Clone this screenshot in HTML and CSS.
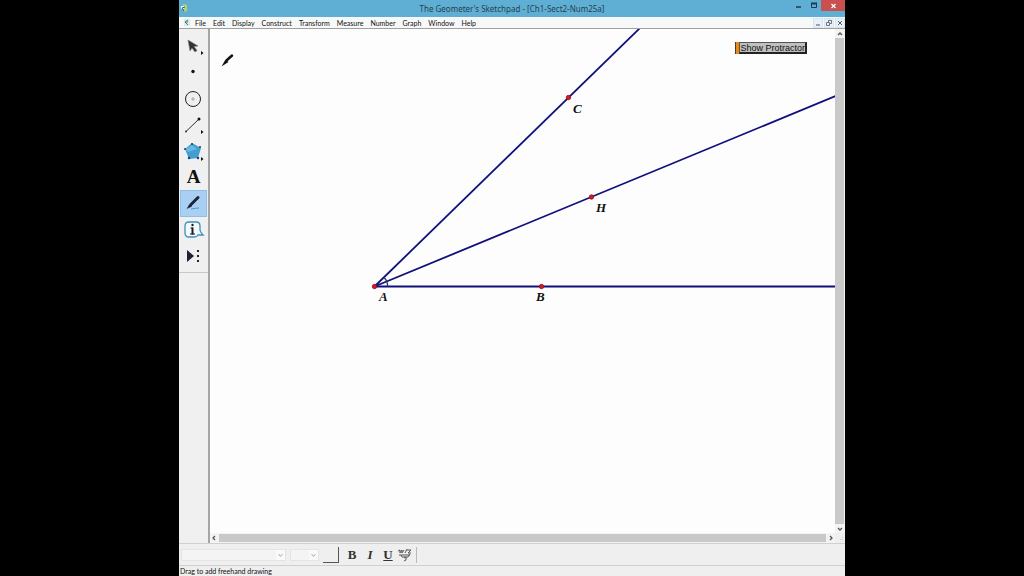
FILE: index.html
```html
<!DOCTYPE html>
<html lang="en">
<head>
    <meta charset="UTF-8">
    <meta name="viewport" content="width=device-width, initial-scale=1.0">
    <title>The Geometer's Sketchpad</title>
    <link rel="stylesheet" href="styles.css">
</head>
<body>
    <div class="window">
        <header class="title-bar">
            <svg class="app-icon" viewBox="0 0 8 10"><path d="M3 1l4 1v6l-3 1z" fill="#b9d36a"/><path d="M1 3h3v3H1z" fill="#e9f4f0"/><path d="M2 5l3-1M2 5l2 3" stroke="#24637c" fill="none"/></svg>
            <h1>The Geometer's Sketchpad - [Ch1-Sect2-Num25a]</h1>
            <div class="window-buttons">
                <button aria-label="Minimize"><svg viewBox="0 0 15 11"><path d="M5 7h5" stroke="#1d3a48" stroke-width="1.500"/></svg></button>
                <button aria-label="Maximize"><svg viewBox="0 0 15 11"><path d="M5.500 3.500h5v4h-5z" fill="none" stroke="#1d3a48"/><path d="M5 3.500h6" stroke="#1d3a48" stroke-width="2"/></svg></button>
                <button class="close" aria-label="Close"><svg viewBox="0 0 23 11"><path d="M10 4l4 4M14 4l-4 4" stroke="#fff" stroke-width="1.200"/></svg></button>
            </div>
        </header>

        <nav class="menu-bar">
            <svg class="doc-icon" viewBox="0 0 8 9"><path d="M1 1h6v7H1z" fill="#d8ebe6"/><path d="M5 2L2 4l3 3M2 4h3" stroke="#3c7d86" fill="none"/></svg>
            <button>File</button>
            <button>Edit</button>
            <button>Display</button>
            <button>Construct</button>
            <button>Transform</button>
            <button>Measure</button>
            <button>Number</button>
            <button>Graph</button>
            <button>Window</button>
            <button>Help</button>
            <div class="doc-buttons">
                <button aria-label="Minimize document"><svg viewBox="0 0 8 8"><path d="M2 6h4" stroke="#47596b"/></svg></button>
                <button aria-label="Restore document"><svg viewBox="0 0 8 8"><path d="M1.500 3.500h3v3h-3zM3.500 3V1.500h3v3H5" fill="none" stroke="#47596b" stroke-width=".8"/></svg></button>
                <button aria-label="Close document"><svg viewBox="0 0 8 8"><path d="M2 2l4 4M6 2L2 6" stroke="#47596b"/></svg></button>
            </div>
        </nav>

        <main class="workspace">
            <aside class="toolbox">
                <div class="tools">
                    <button aria-label="Selection arrow"><svg viewBox="0 0 26 26"><path d="M8 7l10 6-4 .5 3 4-2 1.500-3-4-2 3z" fill="#333" stroke="#777" stroke-width=".6"/><path d="M21 18l2.500 2-2.500 2z" fill="#111"/></svg></button>
                    <button aria-label="Point"><svg viewBox="0 0 26 26"><circle cx="13" cy="12.500" r="1.700" fill="#111"/></svg></button>
                    <button aria-label="Compass"><svg viewBox="0 0 26 26"><circle cx="13" cy="13" r="7.500" fill="none" stroke="#222"/><path d="M11 13h4M13 11v4" stroke="#999" stroke-width=".8"/></svg></button>
                    <button aria-label="Straightedge"><svg viewBox="0 0 26 26"><path d="M6 19.500L19 7" stroke="#333"/><circle cx="6" cy="19.500" r="1" fill="#333"/><circle cx="19" cy="7" r="1.500" fill="#111"/><path d="M21 18l2.500 2-2.500 2z" fill="#111"/></svg></button>
                    <button aria-label="Polygon"><svg viewBox="0 0 26 26"><path d="M12 5l9 5-3 10-9 1-4-10z" fill="#419ed2"/><path d="M12 7l5 4-9 3-2-3z" fill="#6cb8e0"/><g fill="#18415f"><circle cx="12" cy="6" r="1"/><circle cx="20" cy="9" r="1"/><circle cx="18" cy="20" r="1.200"/><circle cx="9" cy="20" r="1.200"/><circle cx="5" cy="11" r="1"/></g><path d="M21 19l2.500 2-2.500 2z" fill="#111"/></svg></button>
                    <button class="text-tool" aria-label="Text">A</button>
                    <button class="active" aria-label="Marker"><svg viewBox="0 0 26 26"><path d="M11 19q5-1 8-1" fill="none" stroke="#4b9bd2"/><path d="M11 14.500l7-7" stroke="#20243a" stroke-width="3" stroke-linecap="round"/><path d="M6.500 19l3-5 2.500 2.500z" fill="#20243a"/></svg></button>
                    <button aria-label="Information"><svg viewBox="0 0 26 26"><path d="M9 5h7q4 0 4 4v4q0 2 3 5h-5q-1 2-4 2H9q-4 0-4-4V9q0-4 4-4z" fill="#f4f9fc" stroke="#3d8fc0" stroke-width="1.300"/><circle cx="12.500" cy="8" r="1.200" fill="#171c2c"/><path d="M10.500 11h2v6M10 17h5" fill="none" stroke="#171c2c" stroke-width="1"/><path d="M12.500 10.500v7" stroke="#171c2c" stroke-width="2"/></svg></button>
                    <button aria-label="Custom tools"><svg viewBox="0 0 26 26"><path d="M7 7l7 6-7 6z" fill="#20212e"/><path d="M17 7h2v2h-2zM17 12h2v2h-2zM17 17h2v2h-2z" fill="#20212e"/></svg></button>
                </div>
            </aside>

            <section class="sketch">
                <svg class="drawing" viewBox="0 0 625 504" preserveAspectRatio="xMinYMin slice">
                    <!-- angle BAC with ray AH between -->
                    <g class="rays">
                        <path d="M164.500 257.500L430 -1"/>
                        <path d="M164.500 257.500L627 66.500"/>
                        <path d="M164.500 257.500H627"/>
                    </g>
                    <path class="arc" d="M174 248.500q4 4 3.500 9"/>
                    <g class="points">
                        <circle cx="164.500" cy="257.500" r="2.200"/>
                        <circle cx="331.500" cy="257.500" r="2.200"/>
                        <circle cx="358.500" cy="68.500" r="2.200"/>
                        <circle cx="381.500" cy="168" r="2.200"/>
                    </g>
                    <g class="labels">
                        <text x="169" y="272">A</text>
                        <text x="326" y="272">B</text>
                        <text x="363" y="84">C</text>
                        <text x="386" y="183">H</text>
                    </g>
                    <!-- marker cursor -->
                    <path d="M17 31l5-4.500" stroke="#111" stroke-width="2.500" stroke-linecap="round"/>
                    <path d="M11.500 37.500l4-7 3 2.500z" fill="#111"/>
                </svg>
                <button class="protractor">Show Protractor</button>
            </section>

            <div class="scroll-v">
                <svg viewBox="0 0 10 9"><path d="M3 6l2-2 2 2" fill="none" stroke="#555" stroke-width="1.300"/></svg>
                <div class="thumb"></div>
                <svg viewBox="0 0 10 9"><path d="M3 4l2 2 2-2" fill="none" stroke="#555" stroke-width="1.300"/></svg>
            </div>
            <div class="scroll-h">
                <svg viewBox="0 0 9 10"><path d="M5 3L3 5l2 2" fill="none" stroke="#555" stroke-width="1.300"/></svg>
                <div class="thumb"></div>
                <svg viewBox="0 0 9 10"><path d="M4 3l2 2-2 2" fill="none" stroke="#555" stroke-width="1.300"/></svg>
            </div>
            <svg class="corner" viewBox="0 0 10 10"><path d="M7 4h1v1H7zM5 6h1v1H5zM7 6h1v1H7z" fill="#c4c4c4"/></svg>
        </main>

        <div class="format-bar">
            <div class="combo">
                <select class="font-name" aria-label="Font"><option></option></select>
                <svg viewBox="0 0 9 10"><path d="M2.500 4l2 2.500 2-2.500" fill="none" stroke="#aaa"/></svg>
            </div>
            <div class="combo">
                <select class="font-size" aria-label="Size"><option></option></select>
                <svg viewBox="0 0 9 10"><path d="M2.500 4l2 2.500 2-2.500" fill="none" stroke="#aaa"/></svg>
            </div>
            <button class="color" aria-label="Color"></button>
            <button class="bold">B</button>
            <button class="italic">I</button>
            <button class="underline">U</button>
            <button class="symbols" aria-label="Math symbols"><svg viewBox="0 0 16 16"><path d="M1 4l2-1v3l2-3v3l2-3M8 6l2-4M10 3h4l-3 3h3M2 8h11M4 8l1 2h6l2-3M7 11l2-1v3l-2 1" fill="none" stroke="#555"/></svg></button>
        </div>

        <footer class="status-bar">Drag to add freehand drawing</footer>
    </div>
</body>
</html>
```
FILE: styles.css
```css
* {
    box-sizing: border-box;
}

body {
    margin: 0;
    padding: 0 179px;
    background: #000;
    font-family: Lato, "Noto Sans", sans-serif;
    font-size: 7px;
    color: #111;
}

button {
    margin: 0;
    padding: 0;
    border: 0;
    background: none;
    font: inherit;
    color: inherit;
}

svg {
    display: block;
}

.window {
    display: flex;
    flex-direction: column;
    height: 100vh;
    background: #efefef;
}

/* Title bar */
.title-bar {
    position: relative;
    display: flex;
    align-items: center;
    justify-content: center;
    height: 17px;
    background: #5fafd4;
}

.title-bar h1 {
    margin: 0;
    font: 8px/16px "Noto Sans", "Open Sans", sans-serif;
    color: #24424f;
}

.app-icon {
    position: absolute;
    left: 1px;
    top: 3px;
    width: 8px;
    height: 10px;
}

.window-buttons {
    position: absolute;
    top: 0;
    right: 0;
    display: flex;
}

.window-buttons button {
    width: 15px;
    height: 11px;
}

.window-buttons .close {
    width: 24px;
    background: #c9504f;
}

.window-buttons svg {
    width: 100%;
    height: 11px;
}

/* Menus */
.menu-bar {
    display: flex;
    align-items: center;
    gap: 7px;
    height: 11px;
    padding-left: 4px;
    background: #f7f8f8;
    line-height: 10px;
}

.doc-icon {
    width: 8px;
    height: 9px;
    margin-right: -3px;
}

.doc-buttons {
    display: flex;
    gap: 1px;
    margin-left: auto;
}

.doc-buttons button {
    width: 10px;
    height: 10px;
    background: #eaf0f7;
    border: 1px solid #dbe3ec;
}

/* Toolbox, sketch and scroll bars */
.workspace {
    display: grid;
    grid-template-columns: 31px minmax(0, 1fr) 10px;
    grid-template-rows: minmax(0, 1fr) 10px;
    flex: 1;
    min-height: 0;
    border-top: 1px solid #a0a0a0;
}

.toolbox {
    grid-row: 1 / 3;
    border-right: 2px solid #a5a5a5;
    background: #f0f0f0;
}

.tools {
    display: flex;
    flex-direction: column;
    height: 244px;
    padding: 4px 1px 3px;
    border-bottom: 1px solid #c8c8c8;
}

.tools button {
    display: flex;
    flex: 1;
    align-items: center;
    min-height: 0;
}

.tools svg {
    flex: none;
    width: 26px;
    height: 26px;
}

.tools .active {
    background: #a9d0f3;
    box-shadow: inset 0 0 0 1px #8fbfe8;
}

.tools .text-tool {
    justify-content: center;
    font: bold 19px "Liberation Serif", serif;
    color: #111;
}

.sketch {
    position: relative;
    background: #fdfdfd;
    overflow: hidden;
}

.drawing {
    width: 100%;
    height: 100%;
}

.rays {
    fill: none;
    stroke: #10107c;
    stroke-width: 1.8;
}

.arc {
    fill: none;
    stroke: #333366;
    stroke-width: 1.3;
}

.points {
    fill: #d8181c;
    stroke: #8a1020;
    stroke-width: 0.8;
}

.labels {
    font: italic bold 13px "Liberation Serif", serif;
    fill: #111;
}

.protractor {
    position: absolute;
    top: 13px;
    right: 28px;
    height: 12px;
    border: 1px solid #555;
    border-right: 2px solid #222;
    border-bottom: 2px solid #222;
    background: #c0c0c0;
    box-shadow: -3px 0 0 #e8891c, -4px 0 0 #55361a;
    font: 9px/10px "Liberation Sans", sans-serif;
    color: #111;
}

.scroll-v,
.scroll-h {
    display: flex;
    background: #f3f3f3;
}

.scroll-v {
    flex-direction: column;
}

.scroll-v svg {
    width: 10px;
    height: 9px;
}

.scroll-h svg {
    width: 9px;
    height: 10px;
}

.thumb {
    flex: 1;
    background: #c9c9c9;
}

.scroll-v .thumb {
    margin-right: 1px;
}

.scroll-h .thumb {
    margin-top: 1px;
    margin-bottom: 1px;
}

.corner {
    width: 10px;
    height: 10px;
}

/* Text formatting */
.format-bar {
    display: flex;
    align-items: center;
    height: 22px;
    padding-left: 2px;
    border-top: 1px solid #d0d0d0;
}

.combo {
    position: relative;
    margin-right: 4px;
}

.combo select {
    display: block;
    height: 12px;
    padding: 0;
    appearance: none;
    border: 1px solid #e4e4e4;
    border-radius: 0;
    background: #f4f4f4;
}

.combo svg {
    position: absolute;
    top: 1px;
    right: 1px;
    width: 9px;
    height: 10px;
    background: #fafafa;
    pointer-events: none;
}

.combo .font-name {
    width: 105px;
}

.combo .font-size {
    width: 29px;
}

.format-bar button {
    width: 18px;
    height: 16px;
    font: bold 13px/16px "Liberation Serif", serif;
    color: #333;
}

.format-bar .color {
    width: 16px;
    margin-right: 4px;
    border-right: 1px solid #555;
    border-bottom: 1px solid #555;
}

.format-bar .italic {
    font-style: italic;
}

.format-bar .underline {
    text-decoration: underline;
}

.format-bar .symbols {
    width: 20px;
    border-right: 1px solid #bbb;
}

.format-bar .symbols svg {
    width: 16px;
    height: 16px;
}

.status-bar {
    height: 11px;
    padding-left: 1px;
    border-top: 1px solid #d0d0d0;
    line-height: 11px;
}
```
